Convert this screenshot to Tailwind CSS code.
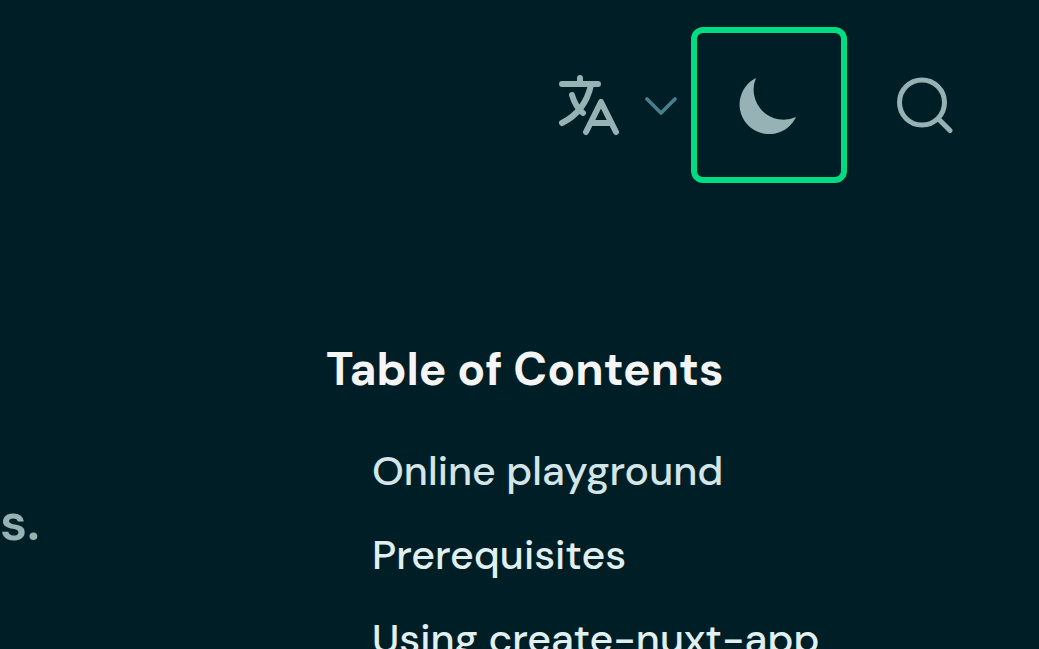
<!DOCTYPE html>
<html lang="en">

<head>
    <meta charset="UTF-8">
    <meta name="viewport" content="width=device-width, initial-scale=1.0">
    <title>Installation</title>
    <script src="https://cdn.jsdelivr.net/npm/@tailwindcss/browser@4"></script>
</head>

<body class="h-screen overflow-hidden bg-[#001e26] font-['DM_Sans','Inter',sans-serif]">
    <header class="flex items-center justify-end pt-[27px] pr-[85px] text-[#97b2b5]">
        <button type="button" aria-label="Change language" class="mr-3.5 flex items-center gap-6 cursor-pointer">
            <svg class="w-[62px] h-[62px]" viewBox="0 0 62 62" fill="none" stroke="currentColor" stroke-width="6"
                stroke-linecap="round" stroke-linejoin="round">
                <path d="M3 10H39M21 4V10M32 11C28 29 19 41 3 49M13 21C15 28 19 35 24 39" />
                <path d="M27 58L42 28L57 58M32 49H52" />
            </svg>
            <svg class="w-8 h-6 text-[#487f8c]" viewBox="0 0 32 24" fill="none" stroke="currentColor"
                stroke-width="3.6" stroke-linecap="round" stroke-linejoin="round">
                <path d="M2 6L16 20L30 6" />
            </svg>
        </button>
        <button type="button" aria-label="Toggle dark mode"
            class="mr-[50px] flex size-[156px] items-center justify-center rounded-xl border-6 border-[#00dc82] cursor-pointer">
            <svg class="size-[60px]" viewBox="0 0 60 60" fill="currentColor">
                <path d="M17 3A29.6 29.6 0 1 0 57 42A30 30 0 0 1 17 3Z" />
            </svg>
        </button>
        <button type="button" aria-label="Search" class="cursor-pointer">
            <svg class="size-[57px]" viewBox="0 0 57 57" fill="none" stroke="currentColor" stroke-width="5"
                stroke-linecap="round">
                <circle cx="25" cy="25.5" r="22.5" />
                <path d="M42 42.5L53 53.5" />
            </svg>
        </button>
    </header>

    <div class="flex">
        <main class="w-[181px] shrink-0 border-b-3 border-[#003543] pt-[307px] pb-[59px]">
            <p class="text-[52px] leading-[64px] font-semibold text-[#97b2b5]">s.</p>
        </main>

        <aside class="ml-[145px] pt-[156px]">
            <h2 class="text-[46px] leading-[60px] font-bold whitespace-nowrap text-[#f4f4f5]">Table of Contents</h2>
            <ul class="mt-[30px] pl-[46px] text-[41px] leading-[84px] font-medium whitespace-nowrap text-[#e0f0f1]">
                <li><a href="#online-playground" class="text-[#d2e6e9]">Online playground</a></li>
                <li><a href="#prerequisites">Prerequisites</a></li>
                <li><a href="#using-create-nuxt-app">Using create-nuxt-app</a></li>
            </ul>
        </aside>
    </div>
</body>

</html>
